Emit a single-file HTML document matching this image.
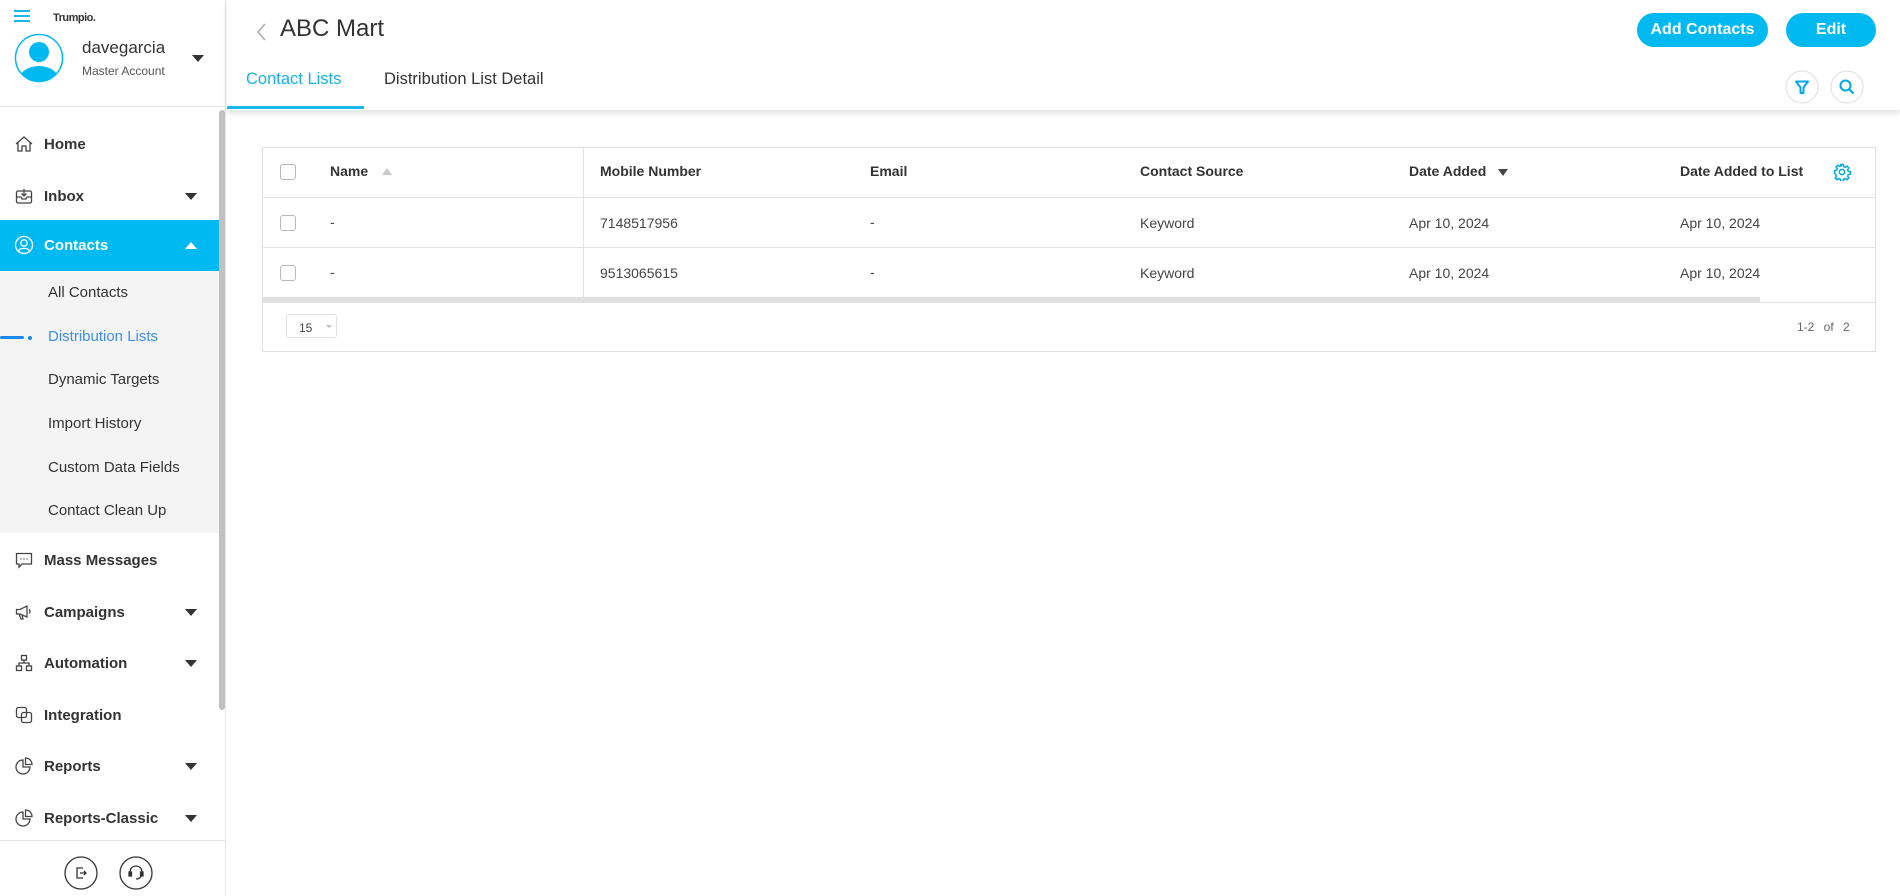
<!DOCTYPE html>
<html><head><meta charset="utf-8"><style>
*{box-sizing:border-box;margin:0;padding:0}
body{width:1900px;height:896px;overflow:hidden;background:#fff;font-family:"Liberation Sans",sans-serif;color:#333;position:relative}
.abs{position:absolute}
#sb{position:absolute;left:0;top:0;width:226px;height:896px;background:#fff;border-right:1px solid #e6e6e6}
.mi{position:absolute;left:0;width:219px;height:40px;display:flex;align-items:center;font-size:15px;font-weight:bold;color:#333}
.mi .ic{position:absolute;left:14px;top:10px;width:20px;height:20px}
.mi .tx{position:absolute;left:44px}
.mi .car{position:absolute;left:185px;top:17px;width:0;height:0;border-left:6px solid transparent;border-right:6px solid transparent;border-top:7px solid #333}
.sub{position:absolute;left:48px;font-size:15px;color:#333}
.th{position:absolute;top:163px;font-size:14px;font-weight:bold;color:#333}
.td{position:absolute;font-size:14px;color:#444}
.cb{position:absolute;left:280px;width:16px;height:16px;border:1px solid #bbb;border-radius:3px;background:#fff}
.hl{position:absolute;left:263px;width:1612px;height:1px;background:#e3e3e3}
</style></head><body>
<div id="sb">
 <div class="abs" style="left:14px;top:10px;width:16px;height:2px;background:#18b7ee;box-shadow:0 5px 0 #18b7ee,0 10px 0 #18b7ee"></div>
 <div class="abs" style="left:53px;top:12px;font-size:11px;font-weight:bold;color:#333;letter-spacing:-0.5px">Trumpio.</div>
 <svg class="abs" style="left:14px;top:33px" width="50" height="50" viewBox="0 0 50 50"><defs><clipPath id="c"><circle cx="25" cy="25" r="23"/></clipPath></defs><circle cx="25" cy="25" r="23.5" fill="#fff" stroke="#00b9f1" stroke-width="1.5"/><g clip-path="url(#c)" fill="#00b9f1"><circle cx="25" cy="19" r="10"/><ellipse cx="25" cy="47" rx="20" ry="14"/></g></svg>
 <div class="abs" style="left:82px;top:38px;font-size:17px;color:#333">davegarcia</div>
 <div class="abs" style="left:82px;top:64px;font-size:12px;color:#555">Master Account</div>
 <div class="abs" style="left:192px;top:55px;border-left:6px solid transparent;border-right:6px solid transparent;border-top:7px solid #333"></div>
 <div class="abs" style="left:0;top:106px;width:226px;height:1px;background:#e6e6e6"></div>
 <div class="abs" style="left:219px;top:110px;width:6px;height:600px;background:#c1c1c1;border-radius:3px"></div>

 <div class="mi" style="top:124px"><svg class="ic" viewBox="0 0 20 20" fill="none" stroke="#444" stroke-width="1.3"><path d="M2 10 L10 3 L18 10 M4 8.5 V17 H8 V12 H12 V17 H16 V8.5"/></svg><span class="tx">Home</span></div>
 <div class="mi" style="top:176px"><svg class="ic" viewBox="0 0 20 20" fill="none" stroke="#444" stroke-width="1.3"><rect x="2.5" y="5" width="15" height="12" rx="1.5"/><path d="M2.5 11 H7 L8 13 H12 L13 11 H17.5 M10 3 V10 M7.5 7.5 L10 10 L12.5 7.5"/></svg><span class="tx">Inbox</span><span class="car"></span></div>
 <div class="mi" style="top:220px;height:51px;background:#00b9f1;color:#fff;width:219px"><svg class="ic" style="top:15px" viewBox="0 0 20 20" fill="none" stroke="#fff" stroke-width="1.3"><circle cx="10" cy="10" r="8.5"/><circle cx="10" cy="8" r="3.2"/><path d="M4.5 16 C5.5 12.5 14.5 12.5 15.5 16"/></svg><span class="tx">Contacts</span><span class="car" style="top:22px;border-top:none;border-bottom:7px solid #fff"></span></div>
 <div class="abs" style="left:0;top:271px;width:219px;height:262px;background:#f4f4f4"></div>
 <div class="sub" style="top:284px">All Contacts</div>
 <div class="abs" style="left:0;top:336px;width:24px;height:3px;background:#1a8be8;border-radius:2px"></div>
 <div class="abs" style="left:28px;top:336px;width:4px;height:4px;background:#1a8be8;border-radius:50%"></div>
 <div class="sub" style="top:328px;color:#3f8ef0">Distribution Lists</div>
 <div class="sub" style="top:371px">Dynamic Targets</div>
 <div class="sub" style="top:415px">Import History</div>
 <div class="sub" style="top:459px">Custom Data Fields</div>
 <div class="sub" style="top:502px">Contact Clean Up</div>

 <div class="mi" style="top:540px"><svg class="ic" viewBox="0 0 20 20" fill="none" stroke="#444" stroke-width="1.3"><path d="M2.5 3.5 H17.5 V14 H8 L5 17 V14 H2.5 Z"/><path d="M6.5 9h1M9.5 9h1M12.5 9h1" stroke-width="1.6"/></svg><span class="tx">Mass Messages</span></div>
 <div class="mi" style="top:592px"><svg class="ic" viewBox="0 0 20 20" fill="none" stroke="#444" stroke-width="1.3"><path d="M2.5 7.5 H6 L13 4 V15 L6 12 H2.5 Z M5 12 L7 17 H9 L8 12.5 M15 7.5 C16.3 8.5 16.3 10.5 15 11.5"/></svg><span class="tx">Campaigns</span><span class="car"></span></div>
 <div class="mi" style="top:643px"><svg class="ic" viewBox="0 0 20 20" fill="none" stroke="#444" stroke-width="1.3"><rect x="7.5" y="2.5" width="5" height="4.5"/><rect x="2.5" y="13" width="5" height="4.5"/><rect x="12.5" y="13" width="5" height="4.5"/><path d="M10 7 V10 M5 13 V10 H15 V13"/></svg><span class="tx">Automation</span><span class="car"></span></div>
 <div class="mi" style="top:695px"><svg class="ic" viewBox="0 0 20 20" fill="none" stroke="#444" stroke-width="1.3"><rect x="2.5" y="2.5" width="10" height="10" rx="2"/><rect x="7.5" y="7.5" width="10" height="10" rx="2"/></svg><span class="tx">Integration</span></div>
 <div class="mi" style="top:746px"><svg class="ic" viewBox="0 0 20 20" fill="none" stroke="#444" stroke-width="1.3"><path d="M9 4 A7 7 0 1 0 16 11 H9 Z M11.5 2 V8.5 H18 A6.5 6.5 0 0 0 11.5 2 Z"/></svg><span class="tx">Reports</span><span class="car"></span></div>
 <div class="mi" style="top:798px"><svg class="ic" viewBox="0 0 20 20" fill="none" stroke="#444" stroke-width="1.3"><path d="M9 4 A7 7 0 1 0 16 11 H9 Z M11.5 2 V8.5 H18 A6.5 6.5 0 0 0 11.5 2 Z"/></svg><span class="tx">Reports-Classic</span><span class="car"></span></div>
 <div class="abs" style="left:0;top:840px;width:226px;height:1px;background:#e6e6e6"></div>
 <svg class="abs" style="left:64px;top:856px" width="34" height="34" viewBox="0 0 34 34" fill="none" stroke="#333" stroke-width="1.3"><circle cx="17" cy="17" r="16"/><path d="M19 12 H13 V22 H19 M16 17 H22 M20 15 L22 17 L20 19"/></svg>
 <svg class="abs" style="left:119px;top:856px" width="34" height="34" viewBox="0 0 34 34" fill="none" stroke="#333" stroke-width="1.3"><circle cx="17" cy="17" r="16"/><path d="M11 19 V16 A6 6 0 0 1 23 16 V19"/><rect x="10" y="16" width="2.5" height="4" fill="#333"/><rect x="21.5" y="16" width="2.5" height="4" fill="#333"/><path d="M22 20 Q21 23 17 23"/></svg>
</div>

<div class="abs" style="left:227px;top:0;width:1673px;height:110px;background:#fff;box-shadow:0 3px 5px rgba(0,0,0,0.12)"></div>
<svg class="abs" style="left:256px;top:22px" width="12" height="20" viewBox="0 0 12 20" fill="none" stroke="#aaa" stroke-width="1.5"><path d="M9 2 L2 10 L9 18"/></svg>
<div class="abs" style="left:280px;top:15px;font-size:24px;color:#333">ABC Mart</div>
<div class="abs" style="left:246px;top:70px;font-size:16.5px;color:#18b0ea">Contact Lists</div>
<div class="abs" style="left:384px;top:70px;font-size:16.5px;color:#333">Distribution List Detail</div>
<div class="abs" style="left:227px;top:106px;width:137px;height:3px;background:#18b7ee"></div>
<div class="abs" style="left:1637px;top:13px;width:131px;height:34px;border-radius:17px;background:#00b9f1;color:#fff;font-weight:bold;font-size:16px;text-align:center;line-height:34px">Add Contacts</div>
<div class="abs" style="left:1786px;top:13px;width:90px;height:34px;border-radius:17px;background:#00b9f1;color:#fff;font-weight:bold;font-size:16px;text-align:center;line-height:34px">Edit</div>
<svg class="abs" style="left:1785px;top:70px" width="34" height="34" viewBox="0 0 34 34" fill="none"><circle cx="17" cy="17" r="16" stroke="#ddd"/><path d="M11 11.5 H23 L18.5 17.5 V23 H15.5 V17.5 Z" stroke="#00a8e6" stroke-width="2" stroke-linejoin="round"/></svg>
<svg class="abs" style="left:1830px;top:70px" width="34" height="34" viewBox="0 0 34 34" fill="none"><circle cx="17" cy="17" r="16" stroke="#ddd"/><circle cx="15.5" cy="15.5" r="5" stroke="#00a8e6" stroke-width="2"/><path d="M19 19 L23.5 23.5" stroke="#00a8e6" stroke-width="2.2"/></svg>

<div class="abs" style="left:262px;top:147px;width:1614px;height:205px;border:1px solid #e0e0e0"></div>
<div class="hl" style="top:197px"></div>
<div class="hl" style="top:247px"></div>
<div class="abs" style="left:263px;top:297px;width:1497px;height:5px;background:#e0e0e0"></div>
<div class="abs" style="left:583px;top:148px;width:1px;height:149px;background:#e3e3e3"></div>
<div class="hl" style="top:302px"></div>
<div class="cb" style="top:164px"></div>
<div class="cb" style="top:215px"></div>
<div class="cb" style="top:265px"></div>
<div class="th" style="left:330px">Name</div>
<div class="abs" style="left:382px;top:168px;border-left:5px solid transparent;border-right:5px solid transparent;border-bottom:7px solid #c8c8c8"></div>
<div class="th" style="left:600px">Mobile Number</div>
<div class="th" style="left:870px">Email</div>
<div class="th" style="left:1140px">Contact Source</div>
<div class="th" style="left:1409px">Date Added</div>
<div class="abs" style="left:1498px;top:169px;border-left:5px solid transparent;border-right:5px solid transparent;border-top:7px solid #444"></div>
<div class="th" style="left:1680px">Date Added to List</div>
<svg class="abs" style="left:1833px;top:163px" width="18" height="18" viewBox="0 0 24 24" fill="none" stroke="#00a8e6" stroke-width="2"><circle cx="12" cy="12" r="3.5"/><path d="M10.3 2h3.4l.6 2.8 2 .9 2.4-1.6 2.4 2.4-1.6 2.4.9 2 2.6.6v3.4l-2.6.6-.9 2 1.6 2.4-2.4 2.4-2.4-1.6-2 .9-.6 2.8h-3.4l-.6-2.8-2-.9-2.4 1.6-2.4-2.4 1.6-2.4-.9-2L2 13.7v-3.4l2.8-.6.9-2-1.6-2.4 2.4-2.4 2.4 1.6 2-.9z"/></svg>
<div class="td" style="left:330px;top:214px">-</div>
<div class="td" style="left:600px;top:215px">7148517956</div>
<div class="td" style="left:870px;top:214px">-</div>
<div class="td" style="left:1140px;top:215px">Keyword</div>
<div class="td" style="left:1409px;top:215px">Apr 10, 2024</div>
<div class="td" style="left:1680px;top:215px">Apr 10, 2024</div>
<div class="td" style="left:330px;top:264px">-</div>
<div class="td" style="left:600px;top:265px">9513065615</div>
<div class="td" style="left:870px;top:264px">-</div>
<div class="td" style="left:1140px;top:265px">Keyword</div>
<div class="td" style="left:1409px;top:265px">Apr 10, 2024</div>
<div class="td" style="left:1680px;top:265px">Apr 10, 2024</div>
<div class="abs" style="left:286px;top:314px;width:51px;height:24px;border:1px solid #e0e0e0;border-radius:3px;font-size:12px;color:#444;padding:6px 0 0 12px">15</div>
<div class="abs" style="left:326px;top:325px;border-left:3px solid transparent;border-right:3px solid transparent;border-top:3px solid #bbb"></div>
<div class="abs" style="left:1797px;top:320px;font-size:12px;color:#666;word-spacing:6px">1-2 of 2</div>
</body></html>
